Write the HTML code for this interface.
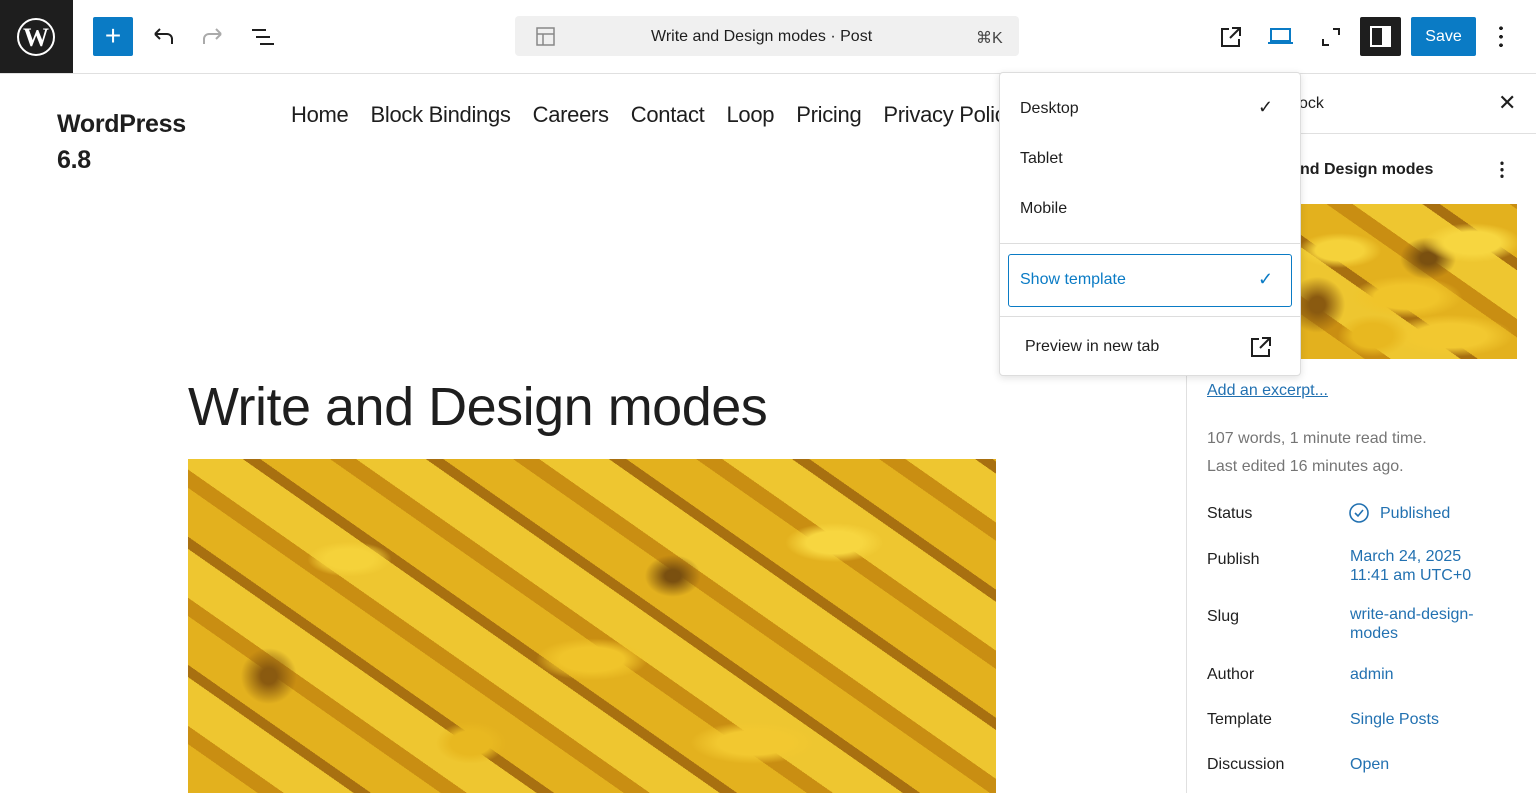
<!DOCTYPE html>
<html><head><meta charset="utf-8"><style>
*{box-sizing:border-box;margin:0;padding:0}
body{width:1536px;height:793px;overflow:hidden;background:#fff;font-family:"Liberation Sans",sans-serif;color:#1e1e1e;position:relative}
.a{position:absolute}
.img{background:
radial-gradient(ellipse 60px 25px at 20% 30%,#f5d23a 40%,transparent 70%),
radial-gradient(ellipse 80px 30px at 50% 60%,#f0c42a 40%,transparent 70%),
radial-gradient(ellipse 70px 28px at 80% 25%,#f7d640 40%,transparent 70%),
radial-gradient(ellipse 50px 30px at 35% 85%,#e8b820 40%,transparent 70%),
radial-gradient(ellipse 90px 30px at 70% 85%,#f2c830 40%,transparent 70%),
radial-gradient(ellipse 40px 40px at 10% 65%,#8a5a10 20%,transparent 70%),
radial-gradient(ellipse 40px 30px at 60% 35%,#7a5010 20%,transparent 70%),
repeating-linear-gradient(35deg,#e3b11e 0 40px,#c98e12 40px 55px,#eec630 55px 95px,#a87010 95px 105px);}
.nav span{margin-right:22px}
.mi{position:absolute;left:20px;font-size:16px}
.lbl{position:absolute;left:1207px;font-size:16px;color:#1e1e1e}
.val{position:absolute;left:1350px;font-size:16px;color:#2271b1;line-height:19px}
</style></head><body>
<div class="a" style="left:0;top:0;width:73px;height:73px;background:#1e1e1e"></div>
<svg class="a" style="left:16px;top:17px" width="40" height="40" viewBox="0 0 40 40"><circle cx="20" cy="20" r="18" fill="none" stroke="#fff" stroke-width="2"/><text x="20" y="29" text-anchor="middle" font-family="Liberation Serif" font-weight="bold" font-size="26" fill="#fff">W</text></svg>
<div class="a" style="left:0;top:73px;width:1536px;height:1px;background:#e0e0e0"></div>
<div class="a" style="left:93px;top:17px;width:40px;height:39px;background:#0a7bc5;border-radius:2px;color:#fff;font-size:28px;text-align:center;line-height:37px">+</div>
<svg class="a" style="left:150px;top:25px" width="26" height="24"><path d="M5 9h12a5 5 0 0 1 5 5v5M5 9l5-5M5 9l5 5" fill="none" stroke="#1e1e1e" stroke-width="2"/></svg>
<svg class="a" style="left:200px;top:25px" width="26" height="24"><path d="M21 9H9a5 5 0 0 0-5 5v5M21 9l-5-5M21 9l-5 5" fill="none" stroke="#aaa" stroke-width="2"/></svg>
<svg class="a" style="left:250px;top:25px" width="26" height="24"><path d="M2 5h14M6 12h14M10 19h14" stroke="#1e1e1e" stroke-width="2"/></svg>
<div class="a" style="left:515px;top:16px;width:504px;height:40px;background:#f0f0f0;border-radius:4px"></div>
<svg class="a" style="left:535px;top:26px" width="22" height="22"><rect x="2" y="2" width="17" height="17" fill="none" stroke="#888" stroke-width="1.5"/><path d="M2 8h17M8 8v11" stroke="#888" stroke-width="1.5"/></svg>
<div class="a" style="left:651px;top:28px;font-size:16px">Write and Design modes · Post</div>
<div class="a" style="left:976px;top:28px;font-size:16px;color:#444">⌘K</div>
<svg class="a" style="left:1219px;top:25px" width="24" height="24"><path d="M10 4H3v17h17v-7M13 3h8v8M21 3l-10 10" fill="none" stroke="#1e1e1e" stroke-width="2"/></svg>
<svg class="a" style="left:1267px;top:26px" width="28" height="20"><rect x="4" y="3" width="19" height="12" fill="none" stroke="#0a7bc5" stroke-width="2"/><path d="M1 17h25" stroke="#0a7bc5" stroke-width="2"/></svg>
<svg class="a" style="left:1319px;top:25px" width="24" height="24"><path d="M14 4h6v6M10 20H4v-6" fill="none" stroke="#1e1e1e" stroke-width="2"/></svg>
<div class="a" style="left:1360px;top:17px;width:41px;height:39px;background:#1e1e1e;border-radius:2px"></div>
<svg class="a" style="left:1369px;top:25px" width="24" height="24"><rect x="2" y="2" width="19" height="19" fill="none" stroke="#fff" stroke-width="2"/><rect x="13" y="2" width="8" height="19" fill="#fff"/></svg>
<div class="a" style="left:1411px;top:17px;width:65px;height:39px;background:#0a7bc5;border-radius:2px;color:#fff;font-size:16px;text-align:center;line-height:39px">Save</div>
<div class="a" style="left:1499px;top:24px;width:4px;height:25px;background:radial-gradient(circle,#1e1e1e 1.8px,transparent 2px) 0 0/4px 8.5px"></div>
<div class="a" style="left:57px;top:106px;font-size:25px;font-weight:bold;line-height:36px;letter-spacing:-0.3px">WordPress<br>6.8</div>
<div class="a nav" style="left:291px;top:102px;font-size:22px;white-space:nowrap;width:710px;overflow:hidden;letter-spacing:-0.3px"><span>Home</span><span>Block Bindings</span><span>Careers</span><span>Contact</span><span>Loop</span><span>Pricing</span><span>Privacy Policy</span></div>
<div class="a" style="left:188px;top:376px;font-size:54px;letter-spacing:-0.5px">Write and Design modes</div>
<div class="a img" style="left:188px;top:459px;width:808px;height:334px"></div>
<div class="a" style="left:1186px;top:74px;width:1px;height:719px;background:#e0e0e0"></div>
<div class="a" style="left:1186px;top:133px;width:350px;height:1px;background:#e0e0e0"></div>
<div class="a" style="left:1299px;top:95px;font-size:16px">ock</div>
<div class="a" style="left:1498px;top:90px;font-size:22px">✕</div>
<div class="a" style="left:1300px;top:161px;font-size:16px;font-weight:bold">nd Design modes</div>
<div class="a" style="left:1500px;top:160px;width:4px;height:19px;background:radial-gradient(circle,#1e1e1e 1.6px,transparent 1.8px) 0 0/4px 6.5px"></div>
<div class="a img" style="left:1295px;top:204px;width:222px;height:155px"></div>
<div class="a" style="left:1207px;top:382px;font-size:16px;color:#2271b1;text-decoration:underline">Add an excerpt...</div>
<div class="a" style="left:1207px;top:425px;font-size:16px;color:#757575;line-height:28px">107 words, 1 minute read time.<br>Last edited 16 minutes ago.</div>
<div class="lbl" style="top:505px">Status</div>
<svg class="a" style="left:1348px;top:502px" width="22" height="22"><circle cx="11" cy="11" r="9" fill="none" stroke="#2271b1" stroke-width="1.6"/><path d="M7 11l3 3 5-6" fill="none" stroke="#2271b1" stroke-width="1.6"/></svg>
<div class="val" style="left:1380px;top:504px">Published</div>
<div class="lbl" style="top:551px">Publish</div>
<div class="val" style="top:547px">March 24, 2025<br>11:41 am UTC+0</div>
<div class="lbl" style="top:608px">Slug</div>
<div class="val" style="top:605px">write-and-design-<br>modes</div>
<div class="lbl" style="top:666px">Author</div>
<div class="val" style="top:665px">admin</div>
<div class="lbl" style="top:711px">Template</div>
<div class="val" style="top:710px">Single Posts</div>
<div class="lbl" style="top:756px">Discussion</div>
<div class="val" style="top:755px">Open</div>
<div class="a" style="left:999px;top:72px;width:302px;height:304px;background:#fff;border:1px solid #ddd;border-radius:4px;box-shadow:0 2px 8px rgba(0,0,0,.12)">
<div class="mi" style="top:27px">Desktop</div><div class="a" style="left:258px;top:24px;font-size:18px">✓</div>
<div class="mi" style="top:77px">Tablet</div>
<div class="mi" style="top:127px">Mobile</div>
<div class="a" style="left:0;top:170px;width:300px;height:1px;background:#ddd"></div>
<div class="a" style="left:8px;top:181px;width:284px;height:53px;border:1.5px solid #0a7bc5;border-radius:3px"></div>
<div class="mi" style="top:198px;color:#0a7bc5">Show template</div><div class="a" style="left:258px;top:196px;font-size:18px;color:#0a7bc5">✓</div>
<div class="a" style="left:0;top:243px;width:300px;height:1px;background:#ddd"></div>
<div class="mi" style="left:25px;top:265px">Preview in new tab</div>
<svg class="a" style="left:249px;top:262px" width="24" height="24"><path d="M10 4H3v17h17v-7M13 3h8v8M21 3l-10 10" fill="none" stroke="#1e1e1e" stroke-width="2"/></svg>
</div>
</body></html>
